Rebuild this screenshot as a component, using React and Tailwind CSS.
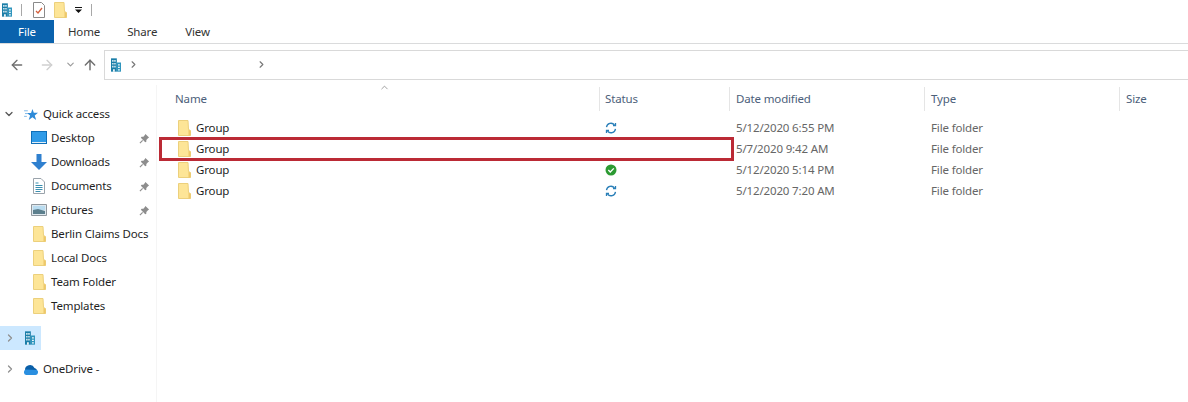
import React from 'react';
import { ArrowLeft, ArrowRight, ArrowUp, ChevronDown, ChevronRight, ChevronUp } from 'lucide-react';

const Building = ({ className }) => (
  <svg className={className} viewBox="0 0 12 16" width="12" height="16">
    <path d="M0 0h7v16H0z" fill="#1b7ea8" />
    <path d="M7 5h5v11H7z" fill="#2f95bd" />
    <path d="M1.500 2h1.500v2H1.500zM4 2h1.500v2H4zM1.500 5.500h1.500v2H1.500zM4 5.500h1.500v2H4zM1.500 9h1.500v2H1.500zM4 9h1.500v2H4zM8.500 7h2v1.500h-2zM8.500 10h2v1.500h-2zM8.500 13h2v1.500h-2zM2.500 13h2v3h-2z" fill="#fff" />
  </svg>
);

const Folder = ({ className }) => (
  <svg className={className} viewBox="0 0 13 16" width="13" height="16">
    <path d="M.5.5h9.500l.5 9 2 1v5H.5z" fill="#fde597" stroke="#ecd07c" />
    <path d="M10.500 9.500l2 1.500v4.500h-2z" fill="#eec86a" />
  </svg>
);

const Pin = () => (
  <svg viewBox="0 0 12 12" width="11" height="11" className="shrink-0">
    <path d="M7 1l4 4-1.200.6L8 7.500 8 9.500 6.800 10 2 5.200l.8-1.200 2 0L6.400 2.200z" fill="#8d8d8d" />
    <path d="M4 8l-3 3" stroke="#8d8d8d" strokeWidth="1.200" />
  </svg>
);

const SyncIcon = () => (
  <svg viewBox="0 0 12 12" width="12" height="12" fill="none" stroke="#2a7fb8" strokeWidth="1.300">
    <path d="M1.500 5.200A4.500 4.500 0 0 1 9.500 3" />
    <path d="M10.500 1v2.600H8" />
    <path d="M10.500 6.800A4.500 4.500 0 0 1 2.500 9" />
    <path d="M1.500 11V8.400H4" />
  </svg>
);

const OkIcon = () => (
  <svg viewBox="0 0 12 12" width="12" height="12">
    <circle cx="6" cy="6" r="5.500" fill="#2c9a32" />
    <path d="M3.300 6l2 2 3.500-3.600" fill="none" stroke="#fff" strokeWidth="1.300" />
  </svg>
);

const navIcons = {
  Desktop: (
    <svg viewBox="0 0 16 14" width="16" height="14">
      <path d="M0 0h16v13H0z" fill="#0f6fb8" />
      <path d="M1 1h14v10H1z" fill="#2f9be8" />
      <path d="M1 11h14v1H1z" fill="#e3eef6" />
    </svg>
  ),
  Downloads: (
    <svg viewBox="0 0 16 16" width="16" height="16">
      <path d="M5.500 0h5v8H16l-8 8-8-8h5.500z" fill="#2f80cf" />
    </svg>
  ),
  Documents: (
    <svg viewBox="0 0 12 16" width="12" height="16">
      <path d="M.5.500h7.500l3.500 3.500v11.500H.5z" fill="#fff" stroke="#9aa3ab" />
      <path d="M2.500 5h3M2.500 7.500h7M2.500 9.500h7M2.500 11.500h7M2.500 13.500h5" stroke="#3a8fb0" />
    </svg>
  ),
  Pictures: (
    <svg viewBox="0 0 16 12" width="16" height="12">
      <path d="M.5.500h15v11H.5z" fill="#dfe8ee" stroke="#8f979d" />
      <path d="M2 2h12v4H2z" fill="#b9dcf0" />
      <path d="M2 6l5-1 7 2v3H2z" fill="#5c7f8d" />
    </svg>
  ),
};

const quickLinks = [
  { name: 'Desktop', pinned: true },
  { name: 'Downloads', pinned: true },
  { name: 'Documents', pinned: true },
  { name: 'Pictures', pinned: true },
  { name: 'Berlin Claims Docs' },
  { name: 'Local Docs' },
  { name: 'Team Folder' },
  { name: 'Templates' },
];

const files = [
  { date: '5/12/2020 6:55 PM', status: <SyncIcon /> },
  { date: '5/7/2020 9:42 AM', status: null },
  { date: '5/12/2020 5:14 PM', status: <OkIcon /> },
  { date: '5/12/2020 7:20 AM', status: <SyncIcon /> },
];

const Sep = () => <div className="h-6 w-px bg-[#e5e5e5]" />;

export default function App() {
  return (
    <div className="w-[1188px] h-[402px] overflow-hidden bg-white text-[11.5px] tracking-[-0.15px] text-[#1f1f1f] font-['Noto_Sans',sans-serif]">
      {/* quick access toolbar */}
      <div className="h-5 flex items-center pl-[2px]">
        <Building className="w-[10px] h-[14px]" />
        <div className="ml-[9px] h-[12px] w-px bg-[#a8a8a8]" />
        <svg viewBox="0 0 12 16" width="12" height="16" className="ml-[11px]">
          <path d="M.5.500h8l3 3v12H.5z" fill="#fff" stroke="#8a8a8a" />
          <path d="M3 9l2 2 4-5" fill="none" stroke="#d5603c" strokeWidth="1.300" />
        </svg>
        <Folder className="ml-[9px]" />
        <svg viewBox="0 0 7 6" width="7" height="6" className="ml-[8px]">
          <path d="M0 0h7v1H0zM0 2.500h7L3.500 6z" fill="#111" />
        </svg>
        <div className="ml-[9px] h-[12px] w-px bg-[#a8a8a8]" />
      </div>

      {/* ribbon tabs */}
      <div className="h-[24px] flex items-stretch border-b border-[#dadbdc]">
        <div className="w-[54px] bg-[#0a62ad] text-white flex items-center justify-center">File</div>
        <div className="flex items-center pl-[14px] text-[#333]">Home</div>
        <div className="flex items-center pl-[27px] text-[#333]">Share</div>
        <div className="flex items-center pl-[28px] text-[#333]">View</div>
      </div>

      {/* nav + address */}
      <div className="h-[41px] flex items-center pl-[9px]">
        <ArrowLeft size={16} strokeWidth={2} className="text-[#6f6f6f]" />
        <ArrowRight size={16} strokeWidth={2} className="ml-[14px] text-[#cfcfcf]" />
        <ChevronDown size={11} strokeWidth={2.500} className="ml-[10px] text-[#9a9a9a]" />
        <ArrowUp size={16} strokeWidth={2.200} className="ml-[6px] text-[#6f6f6f]" />
        <div className="ml-[6px] h-[30px] flex-1 border border-r-0 border-[#d9d9d9] flex items-center pl-[6px]">
          <Building className="w-[10px] h-[14px]" />
          <ChevronRight size={11} strokeWidth={2.500} className="ml-[7px] text-[#777]" />
          <ChevronRight size={11} strokeWidth={2.500} className="ml-[117px] text-[#777]" />
        </div>
      </div>

      <div className="flex">
        {/* sidebar */}
        <div className="w-[157px] h-[317px] border-r border-[#f5f5f5] shrink-0 pt-[17px]">
          <div className="h-6 flex items-center pl-[3px]">
            <ChevronDown size={12} strokeWidth={2.500} className="text-[#555]" />
            <svg viewBox="0 0 16 14" width="15" height="13" className="ml-[9px] shrink-0">
              <path d="M9 1l1.500 4H15l-3.500 3L13 13 9 10l-4 3 1.500-5L3 5.500h4.500z" fill="#2d8ad8" />
              <path d="M0 3h4M1 6h3M0 9h3" stroke="#7ab6e6" />
            </svg>
            <span className="ml-[4px]">Quick access</span>
          </div>
          {quickLinks.map((item) => (
            <div key={item.name} className="h-6 flex items-center">
              <div className="w-[48px] pl-[30px] flex justify-center shrink-0">
                {navIcons[item.name] || <Folder />}
              </div>
              <span className="ml-[3px] whitespace-nowrap">{item.name}</span>
              {item.pinned && <div className="ml-auto mr-[6px]"><Pin /></div>}
            </div>
          ))}
          <div className="mt-[8px] h-6 w-[41px] bg-[#cce8ff] flex items-center pl-[4px]">
            <ChevronRight size={12} strokeWidth={2.500} className="text-[#8f8f8f]" />
            <Building className="ml-[9px] w-[10px] h-[14px]" />
          </div>
          <div className="mt-[7px] h-6 flex items-center pl-[4px]">
            <ChevronRight size={12} strokeWidth={2.500} className="text-[#8f8f8f]" />
            <svg viewBox="0 0 17 11" width="17" height="11" className="ml-[6px] shrink-0">
              <path d="M3 6.500A5 5 0 0 1 12.500 4 3.600 3.600 0 0 1 15 6z" fill="#0a5fa8" />
              <path d="M4 11a3 3 0 0 1-.5-5.500L15 6a2.800 2.800 0 0 1-1.500 5z" fill="#2a8fe0" />
            </svg>
            <span className="ml-[4px]">OneDrive -</span>
          </div>
        </div>

        {/* file list */}
        <div className="relative flex-1">
          <div className="h-[28px] flex items-center text-[#4c607a]">
            <div className="w-[442px] pl-[18px] relative">
              Name
              <ChevronUp size={11} strokeWidth={1.500} className="absolute left-[222px] -top-[8px] text-[#777]" />
            </div>
            <Sep />
            <div className="w-[129px] pl-[5px]">Status</div>
            <Sep />
            <div className="w-[194px] pl-[6px]">Date modified</div>
            <Sep />
            <div className="w-[194px] pl-[6px]">Type</div>
            <Sep />
            <div className="pl-[6px]">Size</div>
          </div>
          <div className="pt-[4px]">
            {files.map((file) => (
              <div key={file.date} className="h-[21px] flex items-center">
                <div className="w-[443px] pl-[21px] flex items-center">
                  <Folder />
                  <span className="ml-[5px]">Group</span>
                </div>
                <div className="w-[130px] pl-[5px] flex items-center">{file.status}</div>
                <div className="w-[195px] pl-[6px] text-[#666]">{file.date}</div>
                <div className="pl-[6px] text-[#666]">File folder</div>
              </div>
            ))}
          </div>
          <div className="absolute left-[2px] top-[52px] w-[575px] h-[24px] border-[3px] border-[#bb2a35]" />
        </div>
      </div>
    </div>
  );
}
